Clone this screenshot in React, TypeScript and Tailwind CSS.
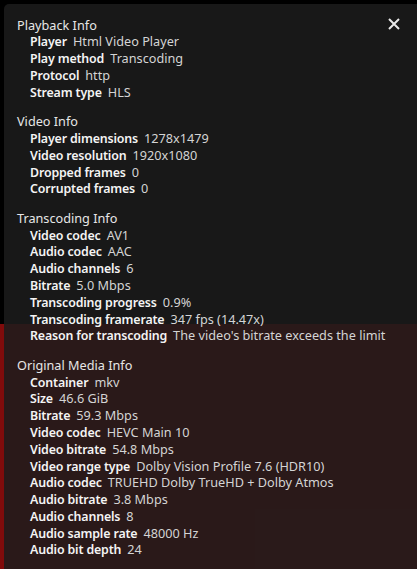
import React from "react";

type Row = [string, string];
const sections: { title: string; rows: Row[] }[] = [
  {
    title: "Playback Info",
    rows: [
      ["Player", "Html Video Player"],
      ["Play method", "Transcoding"],
      ["Protocol", "http"],
      ["Stream type", "HLS"],
    ],
  },
  {
    title: "Video Info",
    rows: [
      ["Player dimensions", "1278x1479"],
      ["Video resolution", "1920x1080"],
      ["Dropped frames", "0"],
      ["Corrupted frames", "0"],
    ],
  },
  {
    title: "Transcoding Info",
    rows: [
      ["Video codec", "AV1"],
      ["Audio codec", "AAC"],
      ["Audio channels", "6"],
      ["Bitrate", "5.0 Mbps"],
      ["Transcoding progress", "0.9%"],
      ["Transcoding framerate", "347 fps (14.47x)"],
      ["Reason for transcoding", "The video's bitrate exceeds the limit"],
    ],
  },
  {
    title: "Original Media Info",
    rows: [
      ["Container", "mkv"],
      ["Size", "46.6 GiB"],
      ["Bitrate", "59.3 Mbps"],
      ["Video codec", "HEVC Main 10"],
      ["Video bitrate", "54.8 Mbps"],
      ["Video range type", "Dolby Vision Profile 7.6 (HDR10)"],
      ["Audio codec", "TRUEHD Dolby TrueHD + Dolby Atmos"],
      ["Audio bitrate", "3.8 Mbps"],
      ["Audio channels", "8"],
      ["Audio sample rate", "48000 Hz"],
      ["Audio bit depth", "24"],
    ],
  },
];

export default function App() {
  return (
    <div
      className="relative w-[417px] h-[569px] overflow-hidden bg-black"
      style={{ fontFamily: '"Noto Sans", sans-serif' }}
    >
      <div className="flex flex-col h-full">
        <div className="h-[324px] bg-black" />
        <div className="flex-1 bg-[#800b0b]" />
      </div>
      <div className="absolute left-[4px] top-[4px] right-0 bottom-0 rounded-tl-[5px] bg-[rgba(28,28,28,0.86)] pl-[13px] pt-[12.6px] text-[12.7px] leading-[16.8px]">
        <button className="absolute right-[10px] top-[7px] w-[26px] h-[26px] flex items-center justify-center text-[#e8e8e8]">
          <svg width="12" height="12" viewBox="0 0 12 12" fill="none" stroke="currentColor" strokeWidth="2">
            <path d="M1 1 L11 11 M11 1 L1 11" />
          </svg>
        </button>
        {sections.map((s, i) => (
          <div key={s.title} className={i > 0 ? "mt-[12.6px]" : ""}>
            <div className="h-[16.8px] text-[#e6e6e6]">{s.title}</div>
            <div className="pl-[13px]">
              {s.rows.map(([k, v]) => (
                <div key={k} className="h-[16.8px] whitespace-nowrap">
                  <span className="font-semibold text-[12.4px] leading-[16.8px] tracking-[-0.15px] text-[#f4f4f4] mr-[6px]">{k}</span>
                  <span className="text-[#d4d4d4]">{v}</span>
                </div>
              ))}
            </div>
          </div>
        ))}
      </div>
    </div>
  );
}
